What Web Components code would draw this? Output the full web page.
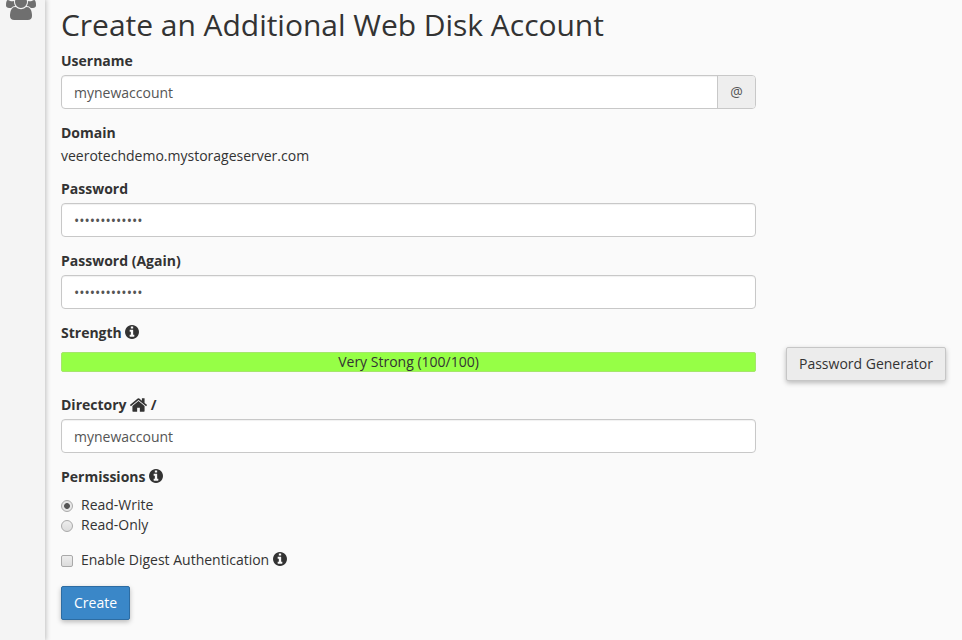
<!DOCTYPE html>
<html lang="en">
<head>
<meta charset="utf-8">
<title>Web Disk</title>
<style>
    body {
        margin: 0;
        height: 640px;
        overflow: hidden;
        background: #fafafa;
        color: #333;
        font: 14px/20px "Open Sans", sans-serif;
    }
</style>
</head>
<body>
<disk-page>
    <side-bar slot="side"></side-bar>
    <h1 slot="title">Create an Additional Web Disk Account</h1>
    <form-field label="Username"><text-field value="mynewaccount" addon="@"></text-field></form-field>
    <form-field label="Domain" class="plain">veerotechdemo.mystorageserver.com</form-field>
    <form-field label="Password"><text-field type="password" value="mynewaccount1"></text-field></form-field>
    <form-field label="Password (Again)"><text-field type="password" value="mynewaccount1"></text-field></form-field>
    <form-field label="Strength">
        <fa-icon slot="icon" name="info"></fa-icon>
        <strength-meter>Very Strong (100/100)</strength-meter>
        <push-button slot="side">Password Generator</push-button>
    </form-field>
    <form-field label="Directory">
        <fa-icon slot="icon" name="home"></fa-icon><span slot="icon"> /</span>
        <text-field value="mynewaccount"></text-field>
    </form-field>
    <form-field label="Permissions" class="permissions">
        <fa-icon slot="icon" name="info"></fa-icon>
        <check-option kind="radio" checked>Read-Write</check-option>
        <check-option kind="radio">Read-Only</check-option>
    </form-field>
    <check-option class="digest">Enable Digest Authentication <fa-icon name="info"></fa-icon></check-option>
    <push-button primary>Create</push-button>
</disk-page>

<script>
const ICONS = {
    info: {
        box: '0 128 1536 1536', width: 14, height: 14,
        path: 'M1024 1376v-160q0-14-9-23t-23-9h-96v-512q0-14-9-23t-23-9h-320q-14 0-23 9t-9 23v160q0 14 9 23t23 9h96v320h-96q-14 0-23 9t-9 23v160q0 14 9 23t23 9h448q14 0 23-9t9-23zm-128-896v-160q0-14-9-23t-23-9h-192q-14 0-23 9t-9 23v160q0 14 9 23t23 9h192q14 0 23-9t9-23zm640 416q0 209-103 385.5t-279.5 279.5-385.5 103-385.5-103-279.5-279.5-103-385.5 103-385.5 279.5-279.5 385.5-103 385.5 103 279.5 279.5 103 385.5z'
    },
    home: {
        box: '90 257 1612 1279', width: 17, height: 14,
        path: 'M1472 992v480q0 26-19 45t-45 19h-384v-384h-256v384h-384q-26 0-45-19t-19-45v-480q0-1 .5-3t.5-3l575-474 575 474q1 2 1 6zm223-69l-62 74q-8 9-21 11h-3q-13 0-21-7l-692-577-692 577q-12 8-24 7-13-2-21-11l-62-74q-8-10-7-23.5t11-21.5l719-599q32-26 76-26t76 26l244 204v-195q0-14 9-23t23-9h192q14 0 23 9t9 23v408l219 182q10 8 11 21.5t-7 23.5z'
    },
    users: {
        box: '0 0 1920 1792', width: 30, height: 28,
        path: 'M593 896q-162 5-265 128h-134q-82 0-138-40.5t-56-118.5q0-353 124-353 6 0 43.5 21t97.5 42.5 119 21.5q67 0 133-23-5 37-5 66 0 139 81 256zm1071 637q0 120-73 189.5t-194 69.5h-874q-121 0-194-69.5t-73-189.5q0-53 3.5-103.5t14-109 26.5-108.5 43-97.5 62-81 85.5-53.5 111.5-20q10 0 43 21.5t73 48 107 48 135 21.5 135-21.5 107-48 73-48 43-21.5q61 0 111.5 20t85.5 53.5 62 81 43 97.5 26.5 108.5 14 109 3.5 103.5zm-1024-1277q0 106-75 181t-181 75-181-75-75-181 75-181 181-75 181 75 75 181zm704 384q0 159-112.5 271.5t-271.5 112.5-271.5-112.5-112.5-271.5 112.5-271.5 271.5-112.5 271.5 112.5 112.5 271.5zm576 225q0 78-56 118.5t-138 40.5h-134q-103-123-265-128 81-117 81-256 0-29-5-66 66 23 133 23 59 0 119-21.5t97.5-42.5 43.5-21q124 0 124 353zm-128-609q0 106-75 181t-181 75-181-75-75-181 75-181 181-75 181 75 75 181z'
    }
};

class FaIcon extends HTMLElement {
    constructor() {
        super();
        const icon = ICONS[this.getAttribute('name')];
        this.attachShadow({ mode: 'open' }).innerHTML = `<style>
            :host { display: inline-block; vertical-align: -1px; line-height: 0; white-space: normal; }
            :host([name="home"]) { vertical-align: -2px; }
            svg { display: block; fill: currentColor; }
        </style>
        <svg width="${icon.width}" height="${icon.height}" viewBox="${icon.box}"><path d="${icon.path}"/></svg>`;
    }
}

class SideBar extends HTMLElement {
    constructor() {
        super();
        this.attachShadow({ mode: 'open' }).innerHTML = `
        <style>
            :host {
                display: block;
                flex: none;
                box-sizing: border-box;
                width: 45px;
                padding-left: 6px;
                background: #f4f4f4;
                box-shadow: 0 0 5px 1px rgba(0, 0, 0, 0.24);
                color: #6f6f6f;
            }
            /* the list is scrolled, so its first icon is cut at the top */
            fa-icon { display: block; margin-top: -8px; }
        </style>
        <fa-icon name="users"></fa-icon>
        `;
    }
}

class DiskPage extends HTMLElement {
    constructor() {
        super();
        this.attachShadow({ mode: 'open' }).innerHTML = `
        <style>
            :host { display: flex; height: 640px; }
            main {
                flex: 1;
                padding: 8px 16px 0;
            }
            ::slotted(h1) {
                margin: 0 0 10px;
                font-size: 30px;
                line-height: 33px;
                font-weight: 400;
                letter-spacing: -0.03px;
            }
            ::slotted(.plain) { --label-gap: 3px; margin-bottom: 13px !important; }
            ::slotted(.permissions) { --label-gap: 8px; margin-bottom: 15px !important; }
            ::slotted(.digest) { margin-bottom: 16px; }
        </style>
        <slot name="side"></slot>
        <main>
            <slot name="title"></slot>
            <slot></slot>
        </main>
        `;
    }
}

class FormField extends HTMLElement {
    constructor() {
        super();
        this.attachShadow({ mode: 'open' }).innerHTML = `
        <style>
            :host { display: block; margin-bottom: 14px; }
            .label {
                height: 20px;
                margin-bottom: var(--label-gap, 4px);
                font-weight: 700;
                white-space: pre;
            }
            .row { display: grid; grid-template-columns: 695px auto; column-gap: 30px; }
        </style>
        <div class="label">${this.getAttribute('label')} <slot name="icon"></slot></div>
        <div class="row">
            <div><slot></slot></div>
            <slot name="side"></slot>
        </div>
        `;
    }
}

class TextField extends HTMLElement {
    constructor() {
        super();
        const addon = this.getAttribute('addon');
        this.attachShadow({ mode: 'open' }).innerHTML = `
        <style>
            :host {
                display: flex;
                box-sizing: border-box;
                height: 34px;
                border: 1px solid #c8c8c8;
                border-radius: 4px;
                background: #fff;
                box-shadow: inset 0 1px 1px rgba(0, 0, 0, 0.06);
                overflow: hidden;
            }
            input {
                flex: 1;
                min-width: 0;
                padding: 2px 12px 0;
                border: 0;
                outline: 0;
                background: none;
                color: #555;
                font: inherit;
            }
            span {
                width: 37px;
                border-left: 1px solid #c8c8c8;
                background: #eee;
                color: #555;
                line-height: 32px;
                text-align: center;
            }
        </style>
        <input type="${this.getAttribute('type') || 'text'}" value="${this.getAttribute('value')}">
        ${addon ? `<span>${addon}</span>` : ''}
        `;
    }
}

class StrengthMeter extends HTMLElement {
    constructor() {
        super();
        this.attachShadow({ mode: 'open' }).innerHTML = `
        <style>
            :host {
                display: block;
                box-sizing: border-box;
                height: 20px;
                margin-top: 5px;
                border: 1px solid #a5e66b;
                border-radius: 2px;
                background: #96ff46;
                line-height: 18px;
                text-align: center;
            }
        </style>
        <slot></slot>
        `;
    }
}

class CheckOption extends HTMLElement {
    constructor() {
        super();
        const kind = this.getAttribute('kind') || 'box';
        this.attachShadow({ mode: 'open' }).innerHTML = `
        <style>
            :host { display: flex; height: 20px; }
            i {
                box-sizing: border-box;
                width: 12px;
                height: 12px;
                margin: 5px 8px 0 0;
                border: 1px solid #a9a9a9;
                border-radius: 2px;
                background: linear-gradient(#ededed, #dcdcdc);
            }
            .radio { border-radius: 50%; }
            :host([checked]) i { background: radial-gradient(circle, #555 2.5px, #e6e6e6 3.3px); }
        </style>
        <i class="${kind}"></i><div><slot></slot></div>
        `;
    }
}

class PushButton extends HTMLElement {
    constructor() {
        super();
        this.attachShadow({ mode: 'open' }).innerHTML = `
        <style>
            :host { display: inline-block; height: 34px; justify-self: start; }
            button {
                display: block;
                height: 34px;
                padding: 0 12px;
                border: 1px solid #c6c6c6;
                border-radius: 2px;
                background: #ececec;
                box-shadow: 0 2px 5px rgba(0, 0, 0, 0.26);
                color: #333;
                font: inherit;
                white-space: nowrap;
            }
            :host([primary]) button { border-color: #2d6ca2; background: #3a87c8; color: #fff; }
        </style>
        <button><slot></slot></button>
        `;
    }
}

customElements.define('fa-icon', FaIcon);
customElements.define('side-bar', SideBar);
customElements.define('disk-page', DiskPage);
customElements.define('form-field', FormField);
customElements.define('text-field', TextField);
customElements.define('strength-meter', StrengthMeter);
customElements.define('check-option', CheckOption);
customElements.define('push-button', PushButton);
</script>
</body>
</html>
